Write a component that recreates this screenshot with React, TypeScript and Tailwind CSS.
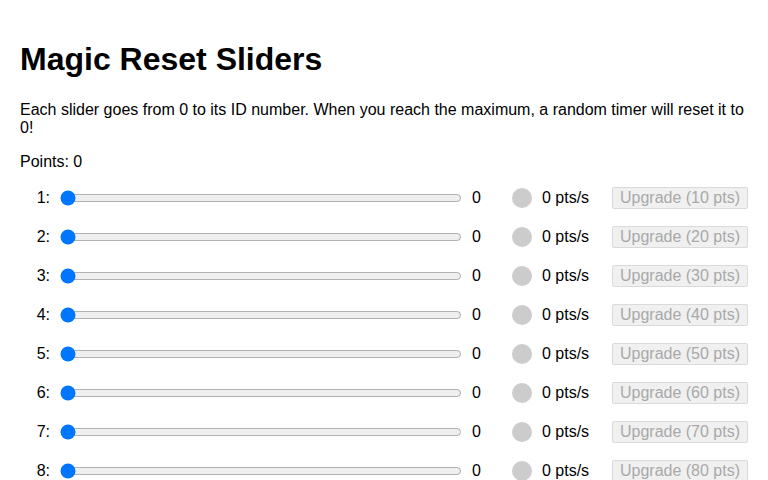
import { useState } from 'react';

// ---------------------------------------------------------------------------
// Data
// ---------------------------------------------------------------------------

const SLIDER_IDS = [1, 2, 3, 4, 5, 6, 7, 8, 9, 10];

// ---------------------------------------------------------------------------
// Row
// ---------------------------------------------------------------------------

function SliderRow({ id }: { id: number }) {
  const [value, setValue] = useState(0);

  return (
    <div className="flex h-[23px] items-center">
      <span className="w-[30px] text-right">{id}:</span>
      <input
        type="range"
        min={0}
        max={id}
        value={value}
        onChange={(e) => setValue(Number(e.target.value))}
        className="ml-[10px] w-[402px] accent-[#0075ff]"
      />
      <span className="ml-[10px] w-[30px]">{value}</span>
      <span className="ml-[10px] h-5 w-5 rounded-full bg-[#cccccc]" />
      <span className="ml-[10px] w-[60px]">0 pts/s</span>
      <button
        disabled
        className="ml-[10px] rounded-[2px] border border-[#dadada] bg-[#f0f0f0] px-[7px] py-px text-[#a9a9a9]"
      >
        Upgrade ({id * 10} pts)
      </button>
    </div>
  );
}

// ---------------------------------------------------------------------------
// App
// ---------------------------------------------------------------------------

export default function App() {
  return (
    <div className="min-h-screen bg-white p-5 font-['Liberation_Sans',Arial,sans-serif] text-[16px] leading-[normal] text-black">
      <h1 className="mt-[21.44px] text-[32px] font-bold">Magic Reset Sliders</h1>
      <p className="mt-[22.5px]">
        Each slider goes from 0 to its ID number. When you reach the maximum, a
        random timer will reset it to 0!
      </p>
      <p className="mt-4">Points: 0</p>

      <div className="mt-4 flex flex-col gap-4">
        {SLIDER_IDS.map((id) => (
          <SliderRow key={id} id={id} />
        ))}
      </div>
    </div>
  );
}
